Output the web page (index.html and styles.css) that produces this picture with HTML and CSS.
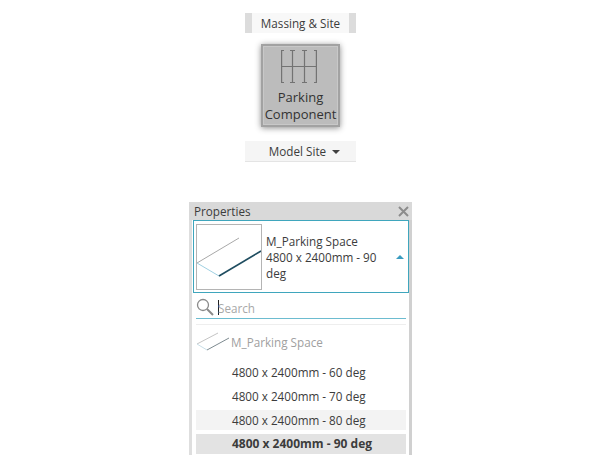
FILE: index.html
```html
<!DOCTYPE html>
<html lang="en">
<head>
    <meta charset="UTF-8">
    <title>Parking Component</title>
    <link rel="stylesheet" href="styles.css">
</head>
<body>
<div class="ribbon">
    <div class="tab"><span>Massing &amp; Site</span></div>
    <div class="tool">
        <svg class="tool-icon" width="36" height="36" viewBox="0 0 36 36" fill="none" stroke="#737373" stroke-width="1.2">
            <path d="M3 1.5H.6V33.5H3M.6 17.5H35.4M11.5 1.5V33.5M9 1.5H14M9 33.5H14M23.5 1.5V33.5M21 1.5H26M21 33.5H26M33 1.5H35.4V33.5H33"/>
        </svg>
        <div class="tool-label">Parking<br>Component</div>
    </div>
    <div class="site">Model Site <i class="caret"></i></div>
</div>

<div class="panel">
    <div class="panel-title">
        <span>Properties</span>
        <svg width="11" height="11" viewBox="0 0 11 11" stroke="#8c8c8c" stroke-width="2">
            <path d="M1 1L10 10M10 1L1 10"/>
        </svg>
    </div>
    <div class="selector">
        <div class="thumb">
            <svg width="64" height="64" viewBox="0 0 64 64" fill="none">
                <path d="M0 38L42 13" stroke="#a8a8a8"/>
                <path d="M0 38L22 51" stroke="#9fd0e2"/>
                <path d="M22 51L64 26" stroke="#1f4d60" stroke-width="1.6"/>
            </svg>
        </div>
        <div class="type-name">M_Parking Space<br>4800 x 2400mm - 90<br>deg</div>
        <i class="arrow"></i>
    </div>
    <div class="search">
        <svg width="18" height="18" viewBox="0 0 18 18" fill="none" stroke="#8a8a8a">
            <circle cx="7" cy="7" r="5.5" stroke-width="1.3"/>
            <path d="M11 11L17 17" stroke-width="2"/>
        </svg>
        <span class="cursor"></span>
        <span class="placeholder">Search</span>
    </div>
    <div class="list">
        <div class="family">
            <svg width="34" height="20" viewBox="0 0 34 20" fill="none">
                <path d="M1 12L22 1" stroke="#c4c4c4"/>
                <path d="M1 12L11 18" stroke="#c9dfe8"/>
                <path d="M11 18L33 6" stroke="#7d8a90"/>
            </svg>
            <span>M_Parking Space</span>
        </div>
        <div class="item">4800 x 2400mm - 60 deg</div>
        <div class="item">4800 x 2400mm - 70 deg</div>
        <div class="item hover">4800 x 2400mm - 80 deg</div>
        <div class="item active">4800 x 2400mm - 90 deg</div>
    </div>
</div>
</body>
</html>
```

FILE: styles.css
```css
html, body {
    height: 100%;
}
body {
    margin: 0;
    background-color: #fff;
    font: 11.7px/16px "Open Sans", "Noto Sans", sans-serif;
    color: #3c3c3c;
    display: flex;
    flex-direction: column;
    align-items: center;
    overflow: hidden;
}
.ribbon {
    display: flex;
    flex-direction: column;
    align-items: center;
    padding-top: 13px;
    margin-left: 1px;
}
.tab {
    width: 97px;
    height: 20px;
    padding: 0 7px;
    background-color: #dcdcdc;
    text-align: center;
}
.tab span {
    display: block;
    height: 20px;
    line-height: 20px;
    background-color: #f8f8f8;
}
.tool {
    width: 79px;
    height: 83px;
    margin-top: 11px;
    box-sizing: border-box;
    background-color: #bcbcbc;
    border: 2px solid #a2a2a2;
    box-shadow: 0 1px 6px rgba(0, 0, 0, .45), inset 0 0 0 1px #c8c8c8;
    display: flex;
    flex-direction: column;
    align-items: center;
    padding-top: 3px;
}
.tool-icon {
    margin-right: 3px;
}
.tool-label {
    margin-top: 4px;
    font-size: 13px;
    line-height: 17px;
    text-align: center;
    white-space: nowrap;
    color: #333;
}
.site {
    width: 111px;
    height: 21px;
    margin-top: 14px;
    background-color: #f5f5f5;
    border-bottom: 1px solid #e4e4e4;
    text-align: center;
    line-height: 20px;
    padding-left: 8px;
    box-sizing: border-box;
}
.caret {
    display: inline-block;
    margin-left: 3px;
    vertical-align: 2px;
    border-left: 4px solid transparent;
    border-right: 4px solid transparent;
    border-top: 4px solid #404040;
}
.panel {
    width: 223px;
    height: 253px;
    margin-top: 40px;
    margin-left: 1px;
    box-sizing: border-box;
    padding: 0 0 0 1px;
    background-color: #fff;
    border: solid #dedede;
    border-width: 0 3px;
    border-right-color: #d0d0d0;
}
.panel-title {
    display: flex;
    justify-content: space-between;
    align-items: center;
    height: 18px;
    margin: 0 -3px 0 -4px;
    padding: 0 3px 0 5px;
    background-color: #d9d9d9;
}
.selector {
    display: flex;
    align-items: center;
    height: 73px;
    box-sizing: border-box;
    border: 1px solid #3fa6bd;
    padding: 2px;
}
.thumb {
    width: 66px;
    height: 66px;
    box-sizing: border-box;
    border: 1px solid #b4b4b4;
    flex: none;
}
.type-name {
    flex: 1;
    padding-left: 4px;
    white-space: nowrap;
}
.arrow {
    margin-right: 2px;
    border-left: 4px solid transparent;
    border-right: 4px solid transparent;
    border-bottom: 4px solid #3a9cc0;
}
.search {
    display: flex;
    align-items: center;
    height: 22px;
    margin: 3px 3px 0;
    border-bottom: 1px solid #6dbcd0;
}
.cursor {
    width: 1px;
    height: 15px;
    margin-left: 4px;
    background-color: #222;
}
.placeholder {
    margin-left: -1px;
    padding-top: 2px;
    color: #a8a8a8;
}
.list {
    margin: 5px 3px 0;
    border-top: 1px solid #eee;
}
.family {
    display: flex;
    align-items: center;
    height: 34px;
    margin-bottom: 3px;
    color: #a0a0a0;
    gap: 1px;
}
.item {
    height: 20px;
    line-height: 20px;
    margin-bottom: 4px;
    padding-left: 36px;
}
.hover {
    background-color: #f3f3f3;
}
.active {
    background-color: #e3e3e3;
    font-size: 12px;
    font-weight: 700;
}
```
